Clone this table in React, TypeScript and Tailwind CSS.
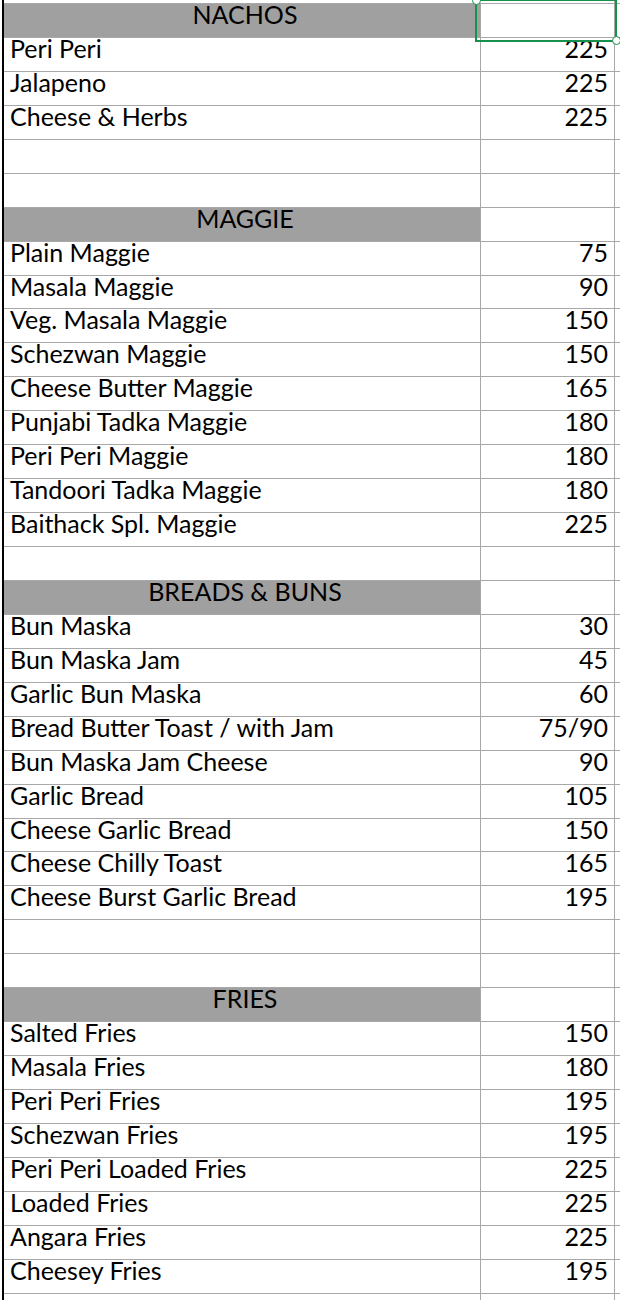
type Row =
  | { kind: 'head'; label: string }
  | { kind: 'item'; name: string; price: string }
  | { kind: 'blank' };

const head = (label: string): Row => ({ kind: 'head', label });
const item = (name: string, price: string): Row => ({ kind: 'item', name, price });
const blank: Row = { kind: 'blank' };

const rows: Row[] = [
  head('NACHOS'),
  item('Peri Peri', '225'),
  item('Jalapeno', '225'),
  item('Cheese & Herbs', '225'),
  blank,
  blank,
  head('MAGGIE'),
  item('Plain Maggie', '75'),
  item('Masala Maggie', '90'),
  item('Veg. Masala Maggie', '150'),
  item('Schezwan Maggie', '150'),
  item('Cheese Butter Maggie', '165'),
  item('Punjabi Tadka Maggie', '180'),
  item('Peri Peri Maggie', '180'),
  item('Tandoori Tadka Maggie', '180'),
  item('Baithack Spl. Maggie', '225'),
  blank,
  head('BREADS & BUNS'),
  item('Bun Maska', '30'),
  item('Bun Maska Jam', '45'),
  item('Garlic Bun Maska', '60'),
  item('Bread Butter Toast / with Jam', '75/90'),
  item('Bun Maska Jam Cheese', '90'),
  item('Garlic Bread', '105'),
  item('Cheese Garlic Bread', '150'),
  item('Cheese Chilly Toast', '165'),
  item('Cheese Burst Garlic Bread', '195'),
  blank,
  blank,
  head('FRIES'),
  item('Salted Fries', '150'),
  item('Masala Fries', '180'),
  item('Peri Peri Fries', '195'),
  item('Schezwan Fries', '195'),
  item('Peri Peri Loaded Fries', '225'),
  item('Loaded Fries', '225'),
  item('Angara Fries', '225'),
  item('Cheesey Fries', '195'),
  blank,
];

function SheetRow({ row }: { row: Row }) {
  return (
    <div className="flex h-[33.95px] shrink-0 border-b border-[#a8a8a8]">
      <div
        className={`flex w-[477px] shrink-0 items-start border-r border-[#a8a8a8] pl-[6px] ${
          row.kind === 'head' ? 'justify-center bg-[#a0a0a0]' : ''
        }`}
      >
        {row.kind === 'head' && <span className="leading-[20px]">{row.label}</span>}
        {row.kind === 'item' && <span className="leading-[20px]">{row.name}</span>}
      </div>
      <div className="flex w-[134px] shrink-0 items-start justify-end border-r border-[#a8a8a8] pr-[6px]">
        {row.kind === 'item' && <span className="leading-[20px]">{row.price}</span>}
      </div>
    </div>
  );
}

export default function App() {
  return (
    <div className="relative h-[1300px] w-[620px] overflow-hidden bg-white pl-[2px] font-['Lato',sans-serif] text-[25px] text-black">
      <div className="flex flex-col border-l-2 border-black">
        <div className="h-[4px] shrink-0 border-b border-[#a8a8a8]">
          <div className="ml-[477px] h-full w-[134px] border-r border-[#a8a8a8]" />
        </div>
        {rows.map((row, i) => (
          <SheetRow key={i} row={row} />
        ))}
      </div>

      {/* selected cell */}
      <div className="absolute left-[475px] top-[-1px] h-[43px] w-[142px] border-2 border-[#17904c]" />
      <div className="absolute left-[472px] top-[-4px] h-[9px] w-[9px] rounded-full border-[1.5px] border-[#17904c] bg-white" />
      <div className="absolute left-[612px] top-[36px] h-[9px] w-[9px] rounded-full border-[1.5px] border-[#17904c] bg-white" />
    </div>
  );
}
